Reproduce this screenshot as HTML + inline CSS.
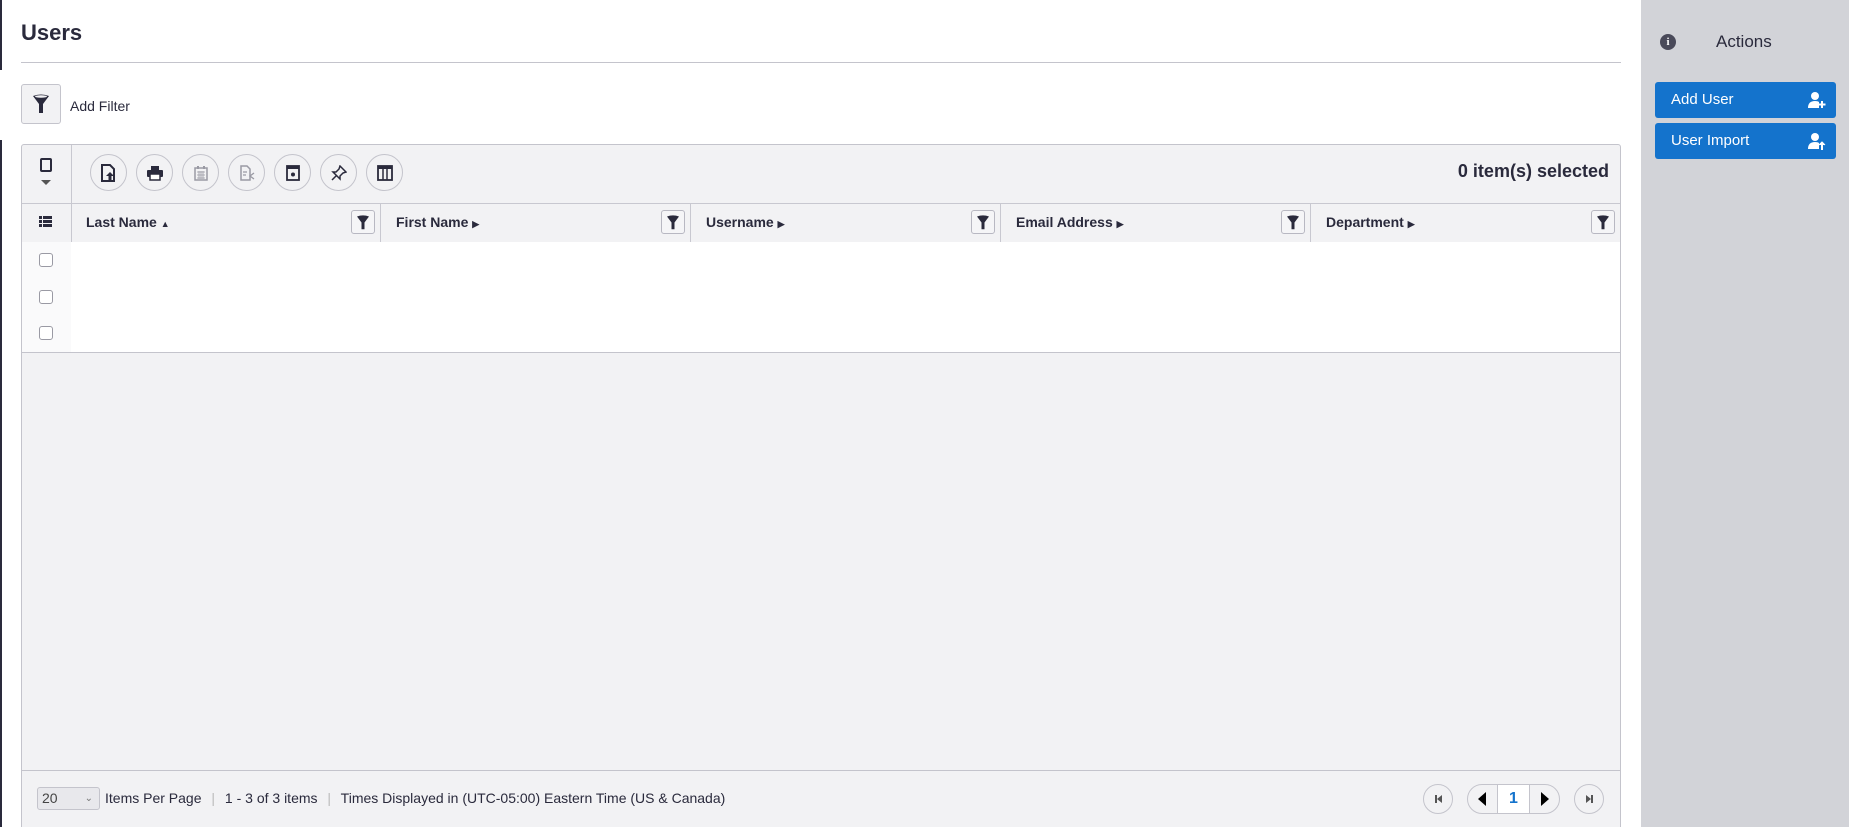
<!DOCTYPE html>
<html style="width:1849px;height:827px;overflow:hidden"><head><meta charset="utf-8"><style>
*{box-sizing:border-box;margin:0;padding:0}
body{width:1849px;height:827px;overflow:hidden;background:#fff;font-family:"Liberation Sans",Arial,sans-serif;color:#2a2a3c;position:relative}
.abs{position:absolute}
.circ{position:absolute;width:37px;height:37px;border:1px solid #c4c4cc;border-radius:50%;top:154px;background:#f2f2f4;display:flex;align-items:center;justify-content:center}
.hdr{position:absolute;top:203px;height:39px;font-weight:bold;font-size:14px;line-height:39px}
.fb{position:absolute;top:210px;width:24px;height:24px;border:1px solid #b8b8c2;border-radius:3px;background:#f5f5f7;display:flex;align-items:center;justify-content:center}
.vd{position:absolute;top:203px;height:39px;width:1px;background:#c8c8d0}
.cb{position:absolute;left:39px;width:14px;height:14px;border:1px solid #9a9aa4;border-radius:3px;background:#fff}
.btn{position:absolute;left:1655px;width:181px;height:36px;background:#1473cc;border-radius:3px;color:#fff;font-size:15px;line-height:36px;padding-left:16px}
.btn svg{position:absolute;right:10px;top:9px}
</style></head><body>
<div class="abs" style="left:0;top:0;width:2px;height:70px;background:#2a2a3c"></div>
<div class="abs" style="left:0;top:140px;width:2px;height:687px;background:#2a2a3c"></div>
<div class="abs" style="left:21px;top:20px;font-size:22px;font-weight:bold">Users</div>
<div class="abs" style="left:21px;top:62px;width:1600px;height:1px;background:#c4c4cc"></div>
<div class="abs" style="left:21px;top:84px;width:40px;height:40px;border:1px solid #c4c4cc;border-radius:3px;background:#f2f2f4;display:flex;align-items:center;justify-content:center">
<svg width="18" height="20" viewBox="0 0 18 20"><path d="M1 2 Q9 -1 17 2 L11 10 L11 19 L7 19 L7 10 Z" fill="#2a2a3c"/><ellipse cx="9" cy="2.5" rx="6" ry="1.2" fill="#f2f2f4"/></svg></div>
<div class="abs" style="left:70px;top:98px;font-size:14px">Add Filter</div>

<div class="abs" style="left:21px;top:144px;width:1600px;height:690px;border:1px solid #c4c4cc;border-radius:3px;background:#f2f2f4"></div>
<div class="abs" style="left:71px;top:145px;width:1px;height:97px;background:#c8c8d0"></div>
<div class="abs" style="left:22px;top:203px;width:1598px;height:1px;background:#c8c8d0"></div>
<div class="abs" style="left:40px;top:158px;width:12px;height:14px;border:2px solid #2a2a3c;border-radius:2px"></div>
<div class="abs" style="left:41px;top:180px;width:0;height:0;border-left:5px solid transparent;border-right:5px solid transparent;border-top:5px solid #555"></div>

<div class="circ" style="left:90px"><svg width="16" height="18" viewBox="0 0 16 18"><path d="M1 1 H9 L13 5 V17 H1 Z" fill="none" stroke="#2a2a3c" stroke-width="2"/><path d="M9 8 L13 12 H10.5 V17 H7.5 V12 H5 Z" fill="#2a2a3c"/></svg></div>
<div class="circ" style="left:136px"><svg width="18" height="16" viewBox="0 0 18 16"><rect x="5" y="1" width="8" height="4" fill="#2a2a3c"/><rect x="1" y="5" width="16" height="7" rx="1" fill="#2a2a3c"/><rect x="4" y="9" width="10" height="6" fill="#fff" stroke="#2a2a3c" stroke-width="1.5"/></svg></div>
<div class="circ" style="left:182px"><svg width="14" height="16" viewBox="0 0 14 16"><rect x="1" y="3" width="12" height="12" fill="none" stroke="#9a9aa4" stroke-width="1.5"/><rect x="3" y="1" width="2" height="3" fill="#9a9aa4"/><rect x="9" y="1" width="2" height="3" fill="#9a9aa4"/><path d="M3 7h8M3 10h8M3 13h8M5 6v8M7 6v8M9 6v8" stroke="#9a9aa4" stroke-width="0.8"/></svg></div>
<div class="circ" style="left:228px"><svg width="16" height="16" viewBox="0 0 16 16"><path d="M2 1 H8 L11 4 V15 H2 Z" fill="none" stroke="#9a9aa4" stroke-width="1.5"/><path d="M4 7h4M4 10h3M15 8 L11 11 L15 14" stroke="#9a9aa4" stroke-width="1.3" fill="none"/></svg></div>
<div class="circ" style="left:274px"><svg width="14" height="16" viewBox="0 0 14 16"><rect x="1" y="1" width="12" height="14" fill="none" stroke="#2a2a3c" stroke-width="1.8"/><rect x="1" y="1" width="12" height="3" fill="#2a2a3c"/><circle cx="7" cy="9.5" r="2" fill="#2a2a3c"/></svg></div>
<div class="circ" style="left:320px"><svg width="16" height="16" viewBox="0 0 16 16"><path d="M9 1 L15 7 L12 8 L9 11 L9 14 L2 7 L5 7 L8 4 Z M5 11 L1 15" fill="none" stroke="#2a2a3c" stroke-width="1.5"/></svg></div>
<div class="circ" style="left:366px"><svg width="16" height="16" viewBox="0 0 16 16"><rect x="1" y="1" width="14" height="14" fill="none" stroke="#2a2a3c" stroke-width="1.8"/><rect x="1" y="1" width="14" height="3" fill="#2a2a3c"/><path d="M6 4v11M10 4v11" stroke="#2a2a3c" stroke-width="1.5"/></svg></div>
<div class="abs" style="right:240px;top:161px;font-size:18px;font-weight:bold">0 item(s) selected</div>

<svg class="abs" style="left:39px;top:216px" width="13" height="11" viewBox="0 0 13 11"><path d="M0 0h3v3H0zM0 4h3v3H0zM0 8h3v3H0zM4 0h9v3H4zM4 4h9v3H4zM4 8h9v3H4z" fill="#2a2a3c"/></svg>
<div class="hdr" style="left:86px">Last Name <span style="font-size:9px">▲</span></div>
<div class="hdr" style="left:396px">First Name <span style="font-size:9px">▶</span></div>
<div class="hdr" style="left:706px">Username <span style="font-size:9px">▶</span></div>
<div class="hdr" style="left:1016px">Email Address <span style="font-size:9px">▶</span></div>
<div class="hdr" style="left:1326px">Department <span style="font-size:9px">▶</span></div>
<div class="vd" style="left:380px"></div><div class="vd" style="left:690px"></div><div class="vd" style="left:1000px"></div><div class="vd" style="left:1310px"></div>
<div class="fb" style="left:351px"><svg width="14" height="15" viewBox="0 0 18 20"><path d="M1 2 Q9 -1 17 2 L11 10 L11 19 L7 19 L7 10 Z" fill="#2a2a3c"/></svg></div>
<div class="fb" style="left:661px"><svg width="14" height="15" viewBox="0 0 18 20"><path d="M1 2 Q9 -1 17 2 L11 10 L11 19 L7 19 L7 10 Z" fill="#2a2a3c"/></svg></div>
<div class="fb" style="left:971px"><svg width="14" height="15" viewBox="0 0 18 20"><path d="M1 2 Q9 -1 17 2 L11 10 L11 19 L7 19 L7 10 Z" fill="#2a2a3c"/></svg></div>
<div class="fb" style="left:1281px"><svg width="14" height="15" viewBox="0 0 18 20"><path d="M1 2 Q9 -1 17 2 L11 10 L11 19 L7 19 L7 10 Z" fill="#2a2a3c"/></svg></div>
<div class="fb" style="left:1591px"><svg width="14" height="15" viewBox="0 0 18 20"><path d="M1 2 Q9 -1 17 2 L11 10 L11 19 L7 19 L7 10 Z" fill="#2a2a3c"/></svg></div>

<div class="abs" style="left:22px;top:242px;width:1598px;height:111px;background:#fff;border-bottom:1px solid #c4c4cc"></div>
<div class="abs" style="left:22px;top:242px;width:49px;height:110px;background:#fafafb"></div>
<div class="cb" style="top:253px"></div><div class="cb" style="top:290px"></div><div class="cb" style="top:326px"></div>

<div class="abs" style="left:22px;top:770px;width:1598px;height:1px;background:#c4c4cc"></div>
<div class="abs" style="left:37px;top:787px;width:63px;height:23px;border:1px solid #c4c4cc;border-radius:3px;background:#e8e8ec;font-size:14px;line-height:21px;padding-left:4px;color:#444">20<span style="position:absolute;right:6px;font-size:10px;color:#777">⌄</span></div>
<div class="abs" style="left:105px;top:790px;font-size:14px;white-space:nowrap">Items Per Page <span style="color:#bbb;margin:0 6px">|</span> 1 - 3 of 3 items <span style="color:#bbb;margin:0 6px">|</span> Times Displayed in (UTC-05:00) Eastern Time (US &amp; Canada)</div>
<div class="abs" style="left:1423px;top:784px;width:30px;height:30px;border:1px solid #c4c4cc;border-radius:50%;display:flex;align-items:center;justify-content:center"><svg width="9" height="10" viewBox="0 0 9 10"><rect x="1" y="1" width="2" height="8" fill="#555"/><path d="M8 1 V9 L3 5 Z" fill="#555"/></svg></div>
<div class="abs" style="left:1467px;top:784px;width:93px;height:30px;border:1px solid #c4c4cc;border-radius:15px;overflow:hidden;display:flex">
<div style="width:30px;display:flex;align-items:center;justify-content:center"><svg width="9" height="14"><path d="M8 0V14L0 7Z" fill="#000"/></svg></div>
<div style="width:33px;background:#fff;border-left:1px solid #c4c4cc;border-right:1px solid #c4c4cc;text-align:center;line-height:28px;font-weight:bold;color:#1473cc;font-size:16px">1</div>
<div style="width:30px;display:flex;align-items:center;justify-content:center"><svg width="9" height="14"><path d="M1 0V14L9 7Z" fill="#000"/></svg></div></div>
<div class="abs" style="left:1574px;top:784px;width:30px;height:30px;border:1px solid #c4c4cc;border-radius:50%;display:flex;align-items:center;justify-content:center"><svg width="9" height="10" viewBox="0 0 9 10"><path d="M1 1 V9 L6 5 Z" fill="#555"/><rect x="6" y="1" width="2" height="8" fill="#555"/></svg></div>

<div class="abs" style="left:1641px;top:0;width:208px;height:827px;background:#d2d3d8"></div>
<div class="abs" style="left:1660px;top:34px;width:16px;height:16px;border-radius:50%;background:#4a4a5a;color:#fff;font-size:11px;font-weight:bold;text-align:center;line-height:16px;font-family:'Liberation Serif',serif">i</div>
<div class="abs" style="left:1716px;top:32px;font-size:17px">Actions</div>
<div class="btn" style="top:82px">Add User<svg width="18" height="18" viewBox="0 0 18 18"><circle cx="7" cy="5" r="4" fill="#fff"/><path d="M0 17 Q0 10 7 10 Q10 10 11 11 V17 Z" fill="#fff"/><path d="M14 10v7M10.5 13.5h7" stroke="#fff" stroke-width="2"/></svg></div>
<div class="btn" style="top:123px">User Import<svg width="18" height="18" viewBox="0 0 18 18"><circle cx="7" cy="5" r="4" fill="#fff"/><path d="M0 17 Q0 10 7 10 Q10 10 11 11 V17 Z" fill="#fff"/><path d="M14 11v7" stroke="#fff" stroke-width="2"/><path d="M11 13l3-3 3 3" fill="#fff" stroke="#fff" stroke-width="1"/></svg></div>
</body></html>
